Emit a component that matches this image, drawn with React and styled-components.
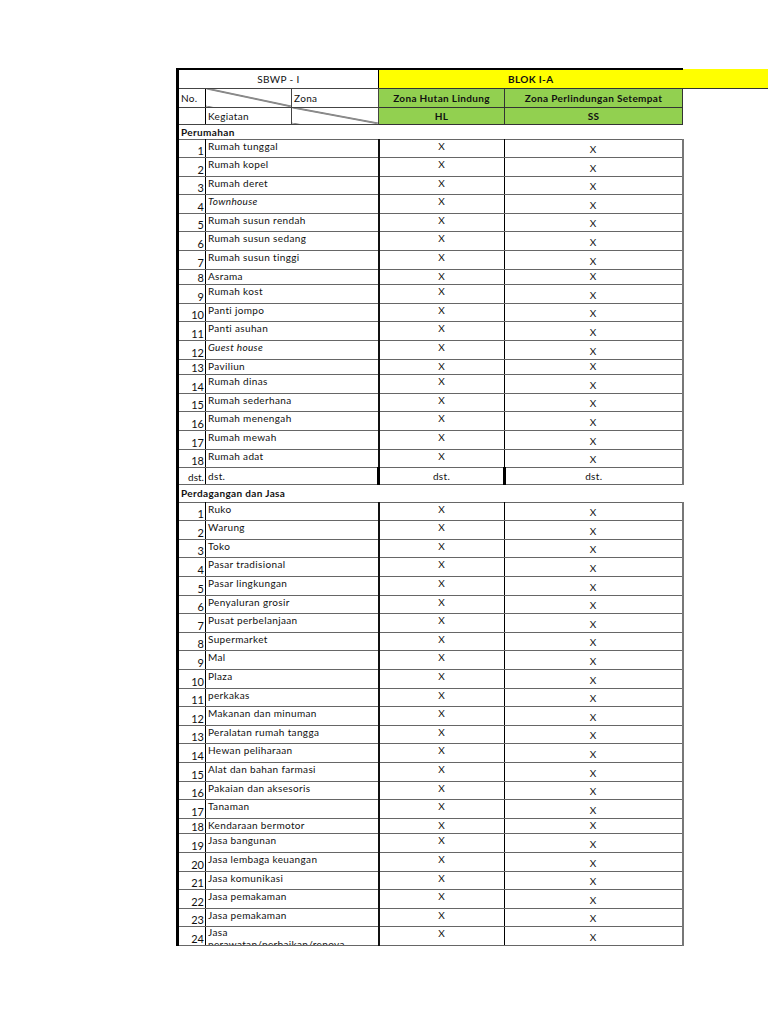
import styled, { createGlobalStyle } from "styled-components";

const GlobalStyle = createGlobalStyle`
  html, body {
    margin: 0;
    padding: 0;
    background: #fff;
  }
  body {
    font-family: Lato, "Open Sans", sans-serif;
    color: #111;
    overflow: hidden;
  }
`;

const perumahan = [
  { name: "Rumah tunggal" },
  { name: "Rumah kopel" },
  { name: "Rumah deret" },
  { name: "Townhouse", italic: true },
  { name: "Rumah susun rendah" },
  { name: "Rumah susun sedang" },
  { name: "Rumah susun tinggi" },
  { name: "Asrama", short: true },
  { name: "Rumah kost" },
  { name: "Panti jompo" },
  { name: "Panti asuhan" },
  { name: "Guest house", italic: true },
  { name: "Paviliun", short: true },
  { name: "Rumah dinas" },
  { name: "Rumah sederhana" },
  { name: "Rumah menengah" },
  { name: "Rumah mewah" },
  { name: "Rumah adat" },
];

const perdagangan = [
  { name: "Ruko" },
  { name: "Warung" },
  { name: "Toko" },
  { name: "Pasar tradisional" },
  { name: "Pasar lingkungan" },
  { name: "Penyaluran grosir" },
  { name: "Pusat perbelanjaan" },
  { name: "Supermarket" },
  { name: "Mal" },
  { name: "Plaza" },
  { name: "perkakas" },
  { name: "Makanan dan minuman" },
  { name: "Peralatan rumah tangga" },
  { name: "Hewan peliharaan" },
  { name: "Alat dan bahan farmasi" },
  { name: "Pakaian dan aksesoris" },
  { name: "Tanaman" },
  { name: "Kendaraan bermotor", short: true },
  { name: "Jasa bangunan" },
  { name: "Jasa lembaga keuangan" },
  { name: "Jasa komunikasi" },
  { name: "Jasa pemakaman" },
  { name: "Jasa pemakaman" },
  { name: "Jasa perawatan/perbaikan/renova", clip: true },
];

const Page = styled.div`
  padding: 68px 0 0 176px;
  height: 1024px;
  box-sizing: border-box;
`;

const Sheet = styled.table`
  border-collapse: collapse;
  table-layout: fixed;
  width: 592px;
  font-size: 10px;
  letter-spacing: 0.35px;
`;

const Col = styled.col`
  width: ${(p) => p.$w}px;
`;

const Row = styled.tr`
  height: ${(p) => p.$h}px;
`;

const HeadCell = styled.td`
  padding: 0 2px;
  line-height: 12px;
  vertical-align: middle;
  text-align: ${(p) => p.$align || "left"};
  font-weight: ${(p) => (p.$bold ? 700 : 400)};
  background: ${(p) => p.$bg || "transparent"};
  border: 1px solid #444;
  border-top: ${(p) => (p.$top ? "2px solid #000" : "1px solid #444")};
  white-space: nowrap;
  overflow: hidden;
`;

const FirstHead = styled(HeadCell)`
  border-left: 3px solid #000;
  border-right: 1px solid #000;
`;

const GreenCell = styled(HeadCell)`
  background: #92d050;
  border: 1px solid #333;
  text-align: center;
  font-weight: 700;
`;

const YellowCell = styled.td`
  background: #ffff00;
  border: none;
  border-top: ${(p) => (p.$top ? "2px solid #000" : "none")};
  border-bottom: 1px solid #333;
  text-align: center;
  font-weight: 700;
  line-height: 12px;
`;

const EmptyCell = styled.td`
  border: none;
  padding: 0;
`;

const SlashCell = styled(HeadCell)`
  background: linear-gradient(
    to top right,
    transparent calc(50% - 0.9px),
    #000 50%,
    transparent calc(50% + 0.9px)
  );
`;

const SectionCell = styled.td`
  padding: 0 2px;
  font-weight: 700;
  line-height: 12px;
  vertical-align: middle;
  border-left: 3px solid #000;
  border-right: none;
`;

const NoCell = styled.td`
  padding: 0 1px 0 0;
  text-align: right;
  vertical-align: bottom;
  font-size: ${(p) => (p.$small ? 10 : 11)}px;
  letter-spacing: 0;
  line-height: ${(p) => (p.$small ? 14 : 13)}px;
  border-left: 3px solid #000;
  border-right: 1px solid #000;
  border-top: 1px solid #666;
  border-bottom: 1px solid #666;
`;

const ItemCell = styled.td`
  padding: 0 2px;
  vertical-align: ${(p) => (p.$middle ? "middle" : "top")};
  line-height: 12px;
  font-style: ${(p) => (p.$italic ? "italic" : "normal")};
  white-space: nowrap;
  overflow: hidden;
  border-top: 1px solid #666;
  border-bottom: 1px solid #666;
  border-right: ${(p) => (p.$heavy ? "3px solid #000" : "2px solid #111")};
`;

const Clip = styled.div`
  white-space: nowrap;
  height: 20px;
  margin-bottom: -3px;
  overflow: hidden;
  line-height: 11.5px;
`;

const MarkCell = styled.td`
  padding: 0 0 ${(p) => (p.$low ? 1 : 0)}px;
  text-align: center;
  vertical-align: ${(p) => (p.$low ? "bottom" : p.$mid ? "middle" : "top")};
  line-height: ${(p) => (p.$low ? 13 : 12)}px;
  border-top: 1px solid #666;
  border-bottom: 1px solid #666;
  border-right: ${(p) => p.$edge};
`;

const DataRow = ({ no, item }) => {
  const h = item.short ? 15.6 : 18.6;
  return (
    <Row $h={h}>
      <NoCell>{no}</NoCell>
      <ItemCell colSpan={2} $italic={item.italic}>
        {item.clip ? (
          <Clip>
            Jasa
            <br />
            perawatan/perbaikan/renova
          </Clip>
        ) : (
          item.name
        )}
      </ItemCell>
      <MarkCell $edge="1px solid #000">X</MarkCell>
      <MarkCell $low $edge="2px solid #777">
        X
      </MarkCell>
      <EmptyCell />
    </Row>
  );
};

const App = () => {
  return (
    <Page>
      <GlobalStyle />
      <Sheet>
        <colgroup>
          <Col $w={28} />
          <Col $w={86} />
          <Col $w={87} />
          <Col $w={126} />
          <Col $w={178} />
          <Col $w={87} />
        </colgroup>
        <tbody>
          <Row $h={19}>
            <FirstHead colSpan={3} $top $align="center">
              SBWP - I
            </FirstHead>
            <YellowCell colSpan={2} $top>
              BLOK I-A
            </YellowCell>
            <YellowCell />
          </Row>
          <Row $h={19}>
            <FirstHead>No.</FirstHead>
            <SlashCell />
            <HeadCell>Zona</HeadCell>
            <GreenCell>Zona Hutan Lindung</GreenCell>
            <GreenCell>Zona Perlindungan Setempat</GreenCell>
            <EmptyCell />
          </Row>
          <Row $h={17}>
            <FirstHead />
            <HeadCell>Kegiatan</HeadCell>
            <SlashCell />
            <GreenCell>HL</GreenCell>
            <GreenCell>SS</GreenCell>
            <EmptyCell />
          </Row>
          <Row $h={15}>
            <SectionCell colSpan={5}>Perumahan</SectionCell>
            <EmptyCell />
          </Row>
          {perumahan.map((item, i) => (
            <DataRow key={`p${i}`} no={i + 1} item={item} />
          ))}
          <Row $h={16.5}>
            <NoCell $small>dst.</NoCell>
            <ItemCell colSpan={2} $heavy $middle>
              dst.
            </ItemCell>
            <MarkCell $mid $edge="3px solid #000">
              dst.
            </MarkCell>
            <MarkCell $mid $edge="2px solid #777">
              dst.
            </MarkCell>
            <EmptyCell />
          </Row>
          <Row $h={18}>
            <SectionCell colSpan={5}>Perdagangan dan Jasa</SectionCell>
            <EmptyCell />
          </Row>
          {perdagangan.map((item, i) => (
            <DataRow key={`d${i}`} no={i + 1} item={item} />
          ))}
        </tbody>
      </Sheet>
    </Page>
  );
};

export default App;
